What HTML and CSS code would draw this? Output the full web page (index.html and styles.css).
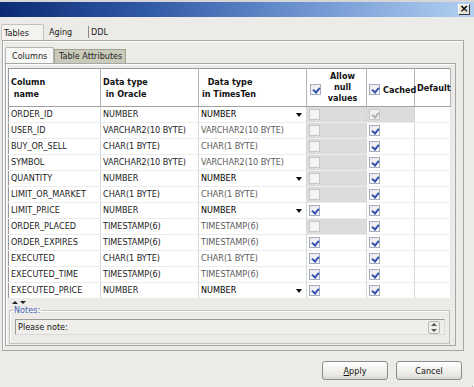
FILE: index.html
```html
<!DOCTYPE html>
<html lang="en">
<head>
  <meta charset="UTF-8">
  <title>Cache Group - Columns</title>
  <link rel="stylesheet" href="styles.css">
</head>
<body>
  <div class="titlebar"><span class="close">&#215;</span></div>

  <!-- outer tabs -->
  <div class="outer-tabs">
    <span class="tab active">Tables</span>
    <span class="tab">Aging</span>
    <span class="tab sep">DDL</span>
  </div>

  <div class="outer-pane">
    <div class="inner-tabs">
      <span class="itab active">Columns</span>
      <span class="itab">Table Attributes</span>
    </div>

    <div class="inner-pane">
      <table class="grid">
        <colgroup>
          <col style="width:92px"><col style="width:98px"><col style="width:108px">
          <col style="width:60px"><col style="width:48px"><col style="width:36px">
        </colgroup>
        <thead>
          <tr>
            <th class="h-left">Column<br>&nbsp;name</th>
            <th class="h-left">Data type<br>&nbsp;in Oracle</th>
            <th class="h-tt">&nbsp;&nbsp;Data type<br>in TimesTen</th>
            <th><div class="h-check"><span class="cb on"></span><span class="h-txt">Allow<br>null<br>values</span></div></th>
            <th class="h-cached"><div class="h-check"><span class="cb on"></span><span class="h-txt">Cached</span></div></th>
            <th class="h-left">Default</th>
          </tr>
        </thead>
        <tbody>
          <tr><td>ORDER_ID</td><td>NUMBER</td><td class="combo"><div>NUMBER<i class="arrow"></i></div></td><td class="null off"><span class="cb off"></span></td><td class="cached dis"><span class="cb on dis"></span></td><td></td></tr>
          <tr><td>USER_ID</td><td>VARCHAR2(10 BYTE)</td><td class="tt">VARCHAR2(10 BYTE)</td><td class="null off"><span class="cb off"></span></td><td class="cached"><span class="cb on"></span></td><td></td></tr>
          <tr><td>BUY_OR_SELL</td><td>CHAR(1 BYTE)</td><td class="tt">CHAR(1 BYTE)</td><td class="null off"><span class="cb off"></span></td><td class="cached"><span class="cb on"></span></td><td></td></tr>
          <tr><td>SYMBOL</td><td>VARCHAR2(10 BYTE)</td><td class="tt">VARCHAR2(10 BYTE)</td><td class="null off"><span class="cb off"></span></td><td class="cached"><span class="cb on"></span></td><td></td></tr>
          <tr><td>QUANTITY</td><td>NUMBER</td><td class="combo"><div>NUMBER<i class="arrow"></i></div></td><td class="null off"><span class="cb off"></span></td><td class="cached"><span class="cb on"></span></td><td></td></tr>
          <tr><td>LIMIT_OR_MARKET</td><td>CHAR(1 BYTE)</td><td class="tt">CHAR(1 BYTE)</td><td class="null off"><span class="cb off"></span></td><td class="cached"><span class="cb on"></span></td><td></td></tr>
          <tr><td>LIMIT_PRICE</td><td>NUMBER</td><td class="combo"><div>NUMBER<i class="arrow"></i></div></td><td class="null"><span class="cb on"></span></td><td class="cached"><span class="cb on"></span></td><td></td></tr>
          <tr><td>ORDER_PLACED</td><td>TIMESTAMP(6)</td><td class="tt">TIMESTAMP(6)</td><td class="null off"><span class="cb off"></span></td><td class="cached"><span class="cb on"></span></td><td></td></tr>
          <tr><td>ORDER_EXPIRES</td><td>TIMESTAMP(6)</td><td class="tt">TIMESTAMP(6)</td><td class="null"><span class="cb on"></span></td><td class="cached"><span class="cb on"></span></td><td></td></tr>
          <tr><td>EXECUTED</td><td>CHAR(1 BYTE)</td><td class="tt">CHAR(1 BYTE)</td><td class="null"><span class="cb on"></span></td><td class="cached"><span class="cb on"></span></td><td></td></tr>
          <tr><td>EXECUTED_TIME</td><td>TIMESTAMP(6)</td><td class="tt">TIMESTAMP(6)</td><td class="null"><span class="cb on"></span></td><td class="cached"><span class="cb on"></span></td><td></td></tr>
          <tr><td>EXECUTED_PRICE</td><td>NUMBER</td><td class="combo"><div>NUMBER<i class="arrow"></i></div></td><td class="null"><span class="cb on"></span></td><td class="cached"><span class="cb on"></span></td><td></td></tr>
        </tbody>
      </table>

      <div class="splitter"><i class="up"></i><i class="down"></i></div>

      <fieldset class="notes">
        <legend>Notes:</legend>
        <div class="note-field">
          <span>Please note:</span>
          <span class="spin"><i class="up"></i><i class="down"></i></span>
        </div>
      </fieldset>
    </div>
  </div>

  <div class="buttons">
    <button class="btn"><u>A</u>pply</button>
    <button class="btn">Cancel</button>
    <span class="grip"></span>
  </div>
</body>
</html>
```

FILE: styles.css
```css
* { box-sizing: border-box; }
body { margin: 0; width: 474px; height: 387px; overflow: hidden; background: #ecebe7; font: 9px/11px "DejaVu Sans Condensed", "DejaVu Sans", sans-serif; font-stretch: condensed; color: #1a1a1a; }

/* title bar */
.titlebar { height: 17px; border-top: 2px solid #d6d6d6; background: linear-gradient(to right, #0b2a74, #2f58a4 30%, #6f95d2 65%, #b3d0f1); display: flex; justify-content: flex-end; align-items: center; padding-right: 4px; }
.close { width: 12px; height: 11px; background: #e6e4de; border: 1px solid; border-color: #fff #3a3a3a #3a3a3a #fff; font: bold 11px/8px "DejaVu Sans", sans-serif; text-align: center; color: #000; }

/* outer tabs */
.outer-tabs { display: flex; align-items: flex-end; height: 23px; padding-left: 1px; }
.tab { height: 16px; padding: 3px 3px 0; color: #222; }
.tab.active { width: 43px; background: #f4f3f0; border: 1px solid #c2c2c2; border-bottom: none; border-radius: 2px 2px 0 0; padding-left: 2px; }
.tab:nth-child(2) { width: 44px; padding-left: 5px; }
.tab.sep { height: 12px; margin-bottom: 2px; padding: 1px 3px 0 2px; border-left: 1px solid #8a8a8a; }

.outer-pane { width: 462px; height: 311px; margin-left: 2px; border: 1px solid #a7a7a7; box-shadow: inset 1px 1px #fff; padding: 0 6px 0 2px; }

/* inner tabs */
.inner-tabs { display: flex; align-items: flex-end; height: 22px; }
.itab { height: 14px; padding: 1px 3px 0 4px; background: #cacaba; border: 1px solid #a2a293; border-bottom: none; color: #222; }
.itab.active { height: 16px; width: 49px; padding: 3px 0 0 6px; background: #f7f7f5; border-color: #b4b4b4; border-radius: 2px 2px 0 0; }

.inner-pane { width: 451px; height: 283px; border: 1px solid #a7a7a7; box-shadow: inset 1px 1px #fff; padding: 4px 2px 0 2px; }

/* columns grid */
.grid { border-collapse: collapse; table-layout: fixed; width: 442px; background: #fff; border: 1px solid #9a9a9a; }
.grid th { height: 38px; padding: 0 2px; font-weight: bold; text-align: left; vertical-align: middle; border-right: 1px solid #b4b4b4; border-bottom: 1px solid #a0a0a0; color: #111; line-height: 12px; }
.grid th.h-tt { padding-left: 3px; }
.grid th.h-cached { padding: 0 0 0 1px; }
.h-check { display: flex; align-items: center; padding-left: 1px; padding-top: 3px; }
.h-txt { flex: 1; text-align: center; line-height: 11px; margin-top: -3px; }
.h-cached .h-txt { text-align: left; padding-left: 3px; margin-top: 3px; white-space: nowrap; }

.grid td { height: 16px; padding: 0 0 0 2px; border-bottom: 1px solid #ececec; border-right: 1px solid #d6d6d6; white-space: nowrap; overflow: hidden; color: #1a1a1a; }
.grid td.tt { color: #5a5a5a; }
.grid td.combo { padding-right: 4px; }
.combo div { display: flex; justify-content: space-between; align-items: center; color: #000; }
.arrow { width: 0; height: 0; border-left: 3px solid transparent; border-right: 3px solid transparent; border-top: 4px solid #111; }
.grid td.null, .grid td.cached { padding-left: 2px; }
.grid td.off, .grid td.dis { background: #dcdcdc; }
.grid td:last-child { border-right-color: #e6e6e6; }

/* checkbox */
.cb { position: relative; display: inline-block; flex-shrink: 0; width: 11px; height: 11px; vertical-align: middle; border: 1px solid #a3acc0; background: linear-gradient(135deg, #e8e8e6, #ffffff); }
.cb.off { border-color: #c6c6c6; background: #f4f4f4; }
.cb.on::after { content: ""; position: absolute; left: 3px; top: 1px; width: 3px; height: 5px; border: solid #3653b0; border-width: 0 2px 2px 0; transform: rotate(40deg); }
.cb.dis { border-color: #c8c8c8; background: #f2f2f2; }
.cb.dis::after { border-color: #b0b0b0; }

/* split arrows */
.splitter { height: 6px; display: flex; align-items: center; gap: 2px; padding-left: 4px; }
.up, .down { width: 0; height: 0; border-left: 3px solid transparent; border-right: 3px solid transparent; }
.up { border-bottom: 3px solid #222; }
.down { border-top: 3px solid #222; }

/* notes */
.notes { margin: 0 3px 0 1px; padding: 3px 4px 3px 5px; height: 39px; border: 1px solid #c2c2c2; box-shadow: inset 1px 1px #fff; }
.notes legend { color: #3e63b6; padding: 0 1px; margin-left: -2px; }
.note-field { height: 16px; display: flex; justify-content: space-between; align-items: center; padding: 0 4px 0 2px; background: #efeeea; border: 1px solid #9a9a9a; border-right-color: #dadada; border-bottom-color: #dadada; color: #111; }
.spin { display: flex; flex-direction: column; gap: 3px; padding: 1px 2px; border: 1px solid #b8b8b8; border-radius: 2px; }
.spin .up { border-bottom-color: #555; }
.spin .down { border-top-color: #555; }

/* buttons */
.buttons { position: relative; display: flex; justify-content: flex-end; gap: 8px; padding: 10px 12px 0 0; }
.btn { width: 66px; height: 19px; padding: 0; font: 9px "DejaVu Sans Condensed", "DejaVu Sans", sans-serif; font-stretch: condensed; color: #111; border: 1px solid #8b8b8b; border-radius: 3px; background: linear-gradient(#fefefe, #ecebe6 70%, #d8d7d0); }
.grip { position: absolute; right: 1px; bottom: -14px; width: 10px; height: 10px; background: repeating-linear-gradient(135deg, transparent 0 2px, #a8a8a0 2px 3px); clip-path: polygon(100% 0, 100% 100%, 0 100%); }
```
